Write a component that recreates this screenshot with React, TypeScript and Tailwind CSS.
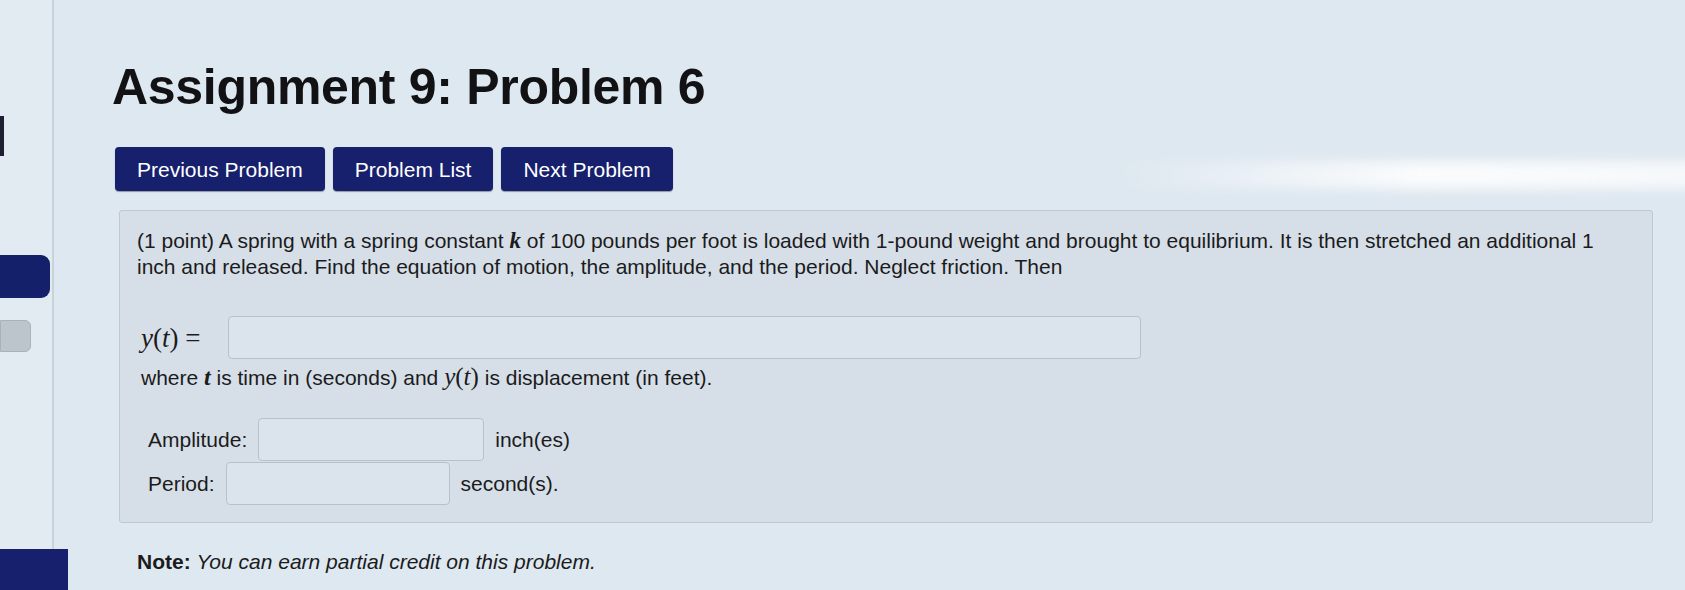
import React from 'react';

const navBtn =
  'flex h-[44px] items-center rounded-[4px] bg-[#17206c] px-[22px] text-[21px] leading-none text-white shadow-[0_1px_1px_rgba(0,0,0,0.35)]';
const answerBox = 'h-[43px] rounded-[4px] border border-[#b7c1ca] bg-[#dbe4ec]';
const serif = "font-['Liberation_Serif',serif]";

function Sidebar() {
  return (
    <aside className="relative flex w-[54px] shrink-0 flex-col border-r-2 border-[#c9d1d9] bg-[#e2ebf2]">
      <div className="mt-[116px] h-[40px] w-[4px] bg-[#1c2030]" />
      <div className="mt-[99px] h-[43px] w-[50px] rounded-r-[9px] bg-[#15206a]" />
      <div className="mt-[22px] h-[32px] w-[31px] rounded-r-[6px] border border-[#a9b2ba] bg-[#bcc4cc]" />
      <div className="mt-auto h-[41px] w-[68px] bg-[#17206c]" />
    </aside>
  );
}

export default function App() {
  return (
    <div className="relative flex h-[590px] w-[1685px] overflow-hidden bg-[#dee8f0] font-['Liberation_Sans',Arial,sans-serif] text-[#1b1b1d]">
      <Sidebar />

      <main className="flex flex-1 flex-col pl-[58px] pt-[62px]">
        <h1 className="text-[50px] leading-none font-bold tracking-[-0.3px] text-[#121214]">
          Assignment 9: Problem 6
        </h1>

        {/* nav buttons */}
        <div className="ml-[3px] mt-[35px] flex gap-2">
          <button className={navBtn}>Previous Problem</button>
          <button className={navBtn}>Problem List</button>
          <button className={navBtn}>Next Problem</button>
        </div>

        {/* problem body */}
        <section className="ml-[7px] mt-[19px] w-[1534px] rounded-[3px] border border-[#bec8d0] bg-[#d6dfe7] px-[17px] pb-[17px] pt-[17px] text-[21px] leading-[26px]">
          <p className="whitespace-nowrap">
            (1 point) A spring with a spring constant{' '}
            <span className={`${serif} text-[23px] font-bold italic`}>k</span> of 100 pounds per foot is loaded with
            1-pound weight and brought to equilibrium. It is then stretched an additional 1
            <br />
            inch and released. Find the equation of motion, the amplitude, and the period. Neglect friction. Then
          </p>

          <div className="mt-[36px] flex items-center">
            <span className={`w-[91px] pl-[4px] ${serif} text-[27px]`}>
              <span className="italic">y</span>(<span className="italic">t</span>) =
            </span>
            <div className={`${answerBox} w-[913px]`} />
          </div>

          <p className="mt-[5px] pl-[4px]">
            where <span className={`${serif} text-[24px] font-bold italic`}>t</span> is time in (seconds) and{' '}
            <span className={`${serif} text-[25px]`}>
              <span className="italic">y</span>(<span className="italic">t</span>)
            </span>{' '}
            is displacement (in feet).
          </p>

          <div className="mt-[27px] flex flex-col gap-px pl-[11px]">
            <div className="flex items-center gap-[11px]">
              <span>Amplitude:</span>
              <div className={`${answerBox} w-[226px]`} />
              <span>inch(es)</span>
            </div>
            <div className="flex items-center gap-[11px]">
              <span>Period:</span>
              <div className={`${answerBox} w-[224px]`} />
              <span>second(s).</span>
            </div>
          </div>
        </section>

        <p className="ml-[25px] mt-[26px] text-[21px] leading-[26px]">
          <b>Note:</b> <i>You can earn partial credit on this problem.</i>
        </p>
      </main>

      {/* glare from the screen photo */}
      <div className="pointer-events-none absolute left-[1110px] top-[161px] h-[28px] w-[620px] rounded-full bg-gradient-to-r from-white/0 via-white/85 to-white/70 blur-[6px]" />
    </div>
  );
}
